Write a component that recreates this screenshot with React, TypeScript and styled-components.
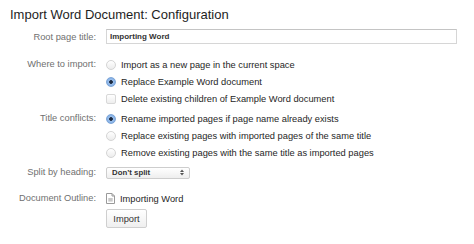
import React from 'react';
import styled, { createGlobalStyle } from 'styled-components';

const GlobalStyle = createGlobalStyle`
  html, body {
    margin: 0;
    padding: 0;
    background: #fff;
  }
  body {
    font-family: 'Liberation Sans', Arial, sans-serif;
  }
`;

const Page = styled.div`
  width: 474px;
  height: 244px;
  padding: 7px 0 0 10px;
  box-sizing: border-box;
  overflow: hidden;
`;

const Title = styled.h1`
  margin: 0;
  font-size: 13px;
  line-height: 16px;
  font-weight: normal;
  color: #1e1e1e;
`;

const Field = styled.div<{ $top: number }>`
  display: grid;
  grid-template-columns: 86px 1fr;
  column-gap: 10px;
  margin-top: ${(p) => p.$top}px;
`;

const Label = styled.div<{ $center?: boolean }>`
  text-align: right;
  font-size: 9.3px;
  line-height: 17px;
  color: #707070;
  align-self: ${(p) => (p.$center ? 'center' : 'start')};
`;

const Options = styled.div`
  display: flex;
  flex-direction: column;
`;

const Option = styled.label`
  display: flex;
  align-items: center;
  height: 17px;
  font-size: 9.3px;
  color: #262626;
  gap: 5px;
`;

const Radio = styled.span<{ $checked?: boolean }>`
  width: 8px;
  height: 8px;
  border-radius: 50%;
  flex: none;
  border: 1px solid ${(p) => (p.$checked ? '#7ea6d8' : '#d4d4d4')};
  background: ${(p) =>
    p.$checked
      ? 'radial-gradient(circle, #1c2a40 0 1.5px, #9cc0ec 2.2px, #6fa2e0 100%)'
      : 'linear-gradient(#ffffff, #ececec)'};
`;

const Check = styled.span`
  width: 8px;
  height: 8px;
  border-radius: 2px;
  flex: none;
  border: 1px solid #d8d8d8;
  background: linear-gradient(#ffffff, #eeeeee);
`;

const TextInput = styled.div`
  height: 15px;
  box-sizing: border-box;
  border: 1px solid #d6d6d6;
  border-top-color: #c4c4c4;
  padding: 0 3px;
  font-size: 8px;
  font-weight: bold;
  line-height: 13px;
  color: #333;
  width: 351px;
`;

const Select = styled.div`
  width: 84px;
  height: 12px;
  box-sizing: border-box;
  border: 1px solid #cdcdcd;
  border-radius: 2px;
  background: linear-gradient(#ffffff, #eeeeee);
  display: flex;
  align-items: center;
  justify-content: space-between;
  padding: 0 5px;
  font-size: 7.8px;
  font-weight: bold;
  color: #333;
  align-self: center;
`;

const Outline = styled.div`
  display: flex;
  align-items: center;
  gap: 5px;
  height: 17px;
  font-size: 9.3px;
  color: #262626;
`;

const Button = styled.button`
  display: block;
  width: 41px;
  height: 19px;
  margin-top: 2px;
  padding: 0;
  border: 1px solid #cfcfcf;
  border-radius: 2px;
  background: linear-gradient(#ffffff, #efefef);
  font-family: 'Liberation Sans', Arial, sans-serif;
  font-size: 9.3px;
  color: #333;
`;

const Arrows = () => (
  <svg width="4" height="7" viewBox="0 0 4 7">
    <path d="M0 3 L2 0.5 L4 3 Z" fill="#555" />
    <path d="M0 4 L2 6.5 L4 4 Z" fill="#555" />
  </svg>
);

const DocIcon = () => (
  <svg width="9" height="11" viewBox="0 0 9 11">
    <path d="M0.5 0.5 H6 L8.5 3 V10.5 H0.5 Z" fill="#fff" stroke="#9a9a9a" />
    <path d="M6 0.5 V3 H8.5" fill="none" stroke="#9a9a9a" />
    <rect x="2.3" y="5" width="4.4" height="3.6" fill="#c8c8c8" />
  </svg>
);

const whereOptions = [
  { text: 'Import as a new page in the current space', kind: 'radio', checked: false },
  { text: 'Replace Example Word document', kind: 'radio', checked: true },
  { text: 'Delete existing children of Example Word document', kind: 'check', checked: false },
];

const conflictOptions = [
  { text: 'Rename imported pages if page name already exists', checked: true },
  { text: 'Replace existing pages with imported pages of the same title', checked: false },
  { text: 'Remove existing pages with the same title as imported pages', checked: false },
];

const App: React.FC = () => (
  <>
    <GlobalStyle />
    <Page>
      <Title>Import Word Document: Configuration</Title>

      <Field $top={6}>
        <Label $center>Root page title:</Label>
        <TextInput>Importing Word</TextInput>
      </Field>

      <Field $top={10}>
        <Label>Where to import:</Label>
        <Options>
          {whereOptions.map((o) => (
            <Option key={o.text}>
              {o.kind === 'radio' ? <Radio $checked={o.checked} /> : <Check />}
              {o.text}
            </Option>
          ))}
        </Options>
      </Field>

      <Field $top={3}>
        <Label>Title conflicts:</Label>
        <Options>
          {conflictOptions.map((o) => (
            <Option key={o.text}>
              <Radio $checked={o.checked} />
              {o.text}
            </Option>
          ))}
        </Options>
      </Field>

      <Field $top={3}>
        <Label>Split by heading:</Label>
        <Select>
          <span>Don’t split</span>
          <Arrows />
        </Select>
      </Field>

      <Field $top={9}>
        <Label>Document Outline:</Label>
        <div>
          <Outline>
            <DocIcon />
            Importing Word
          </Outline>
          <Button type="button">Import</Button>
        </div>
      </Field>
    </Page>
  </>
);

export default App;
